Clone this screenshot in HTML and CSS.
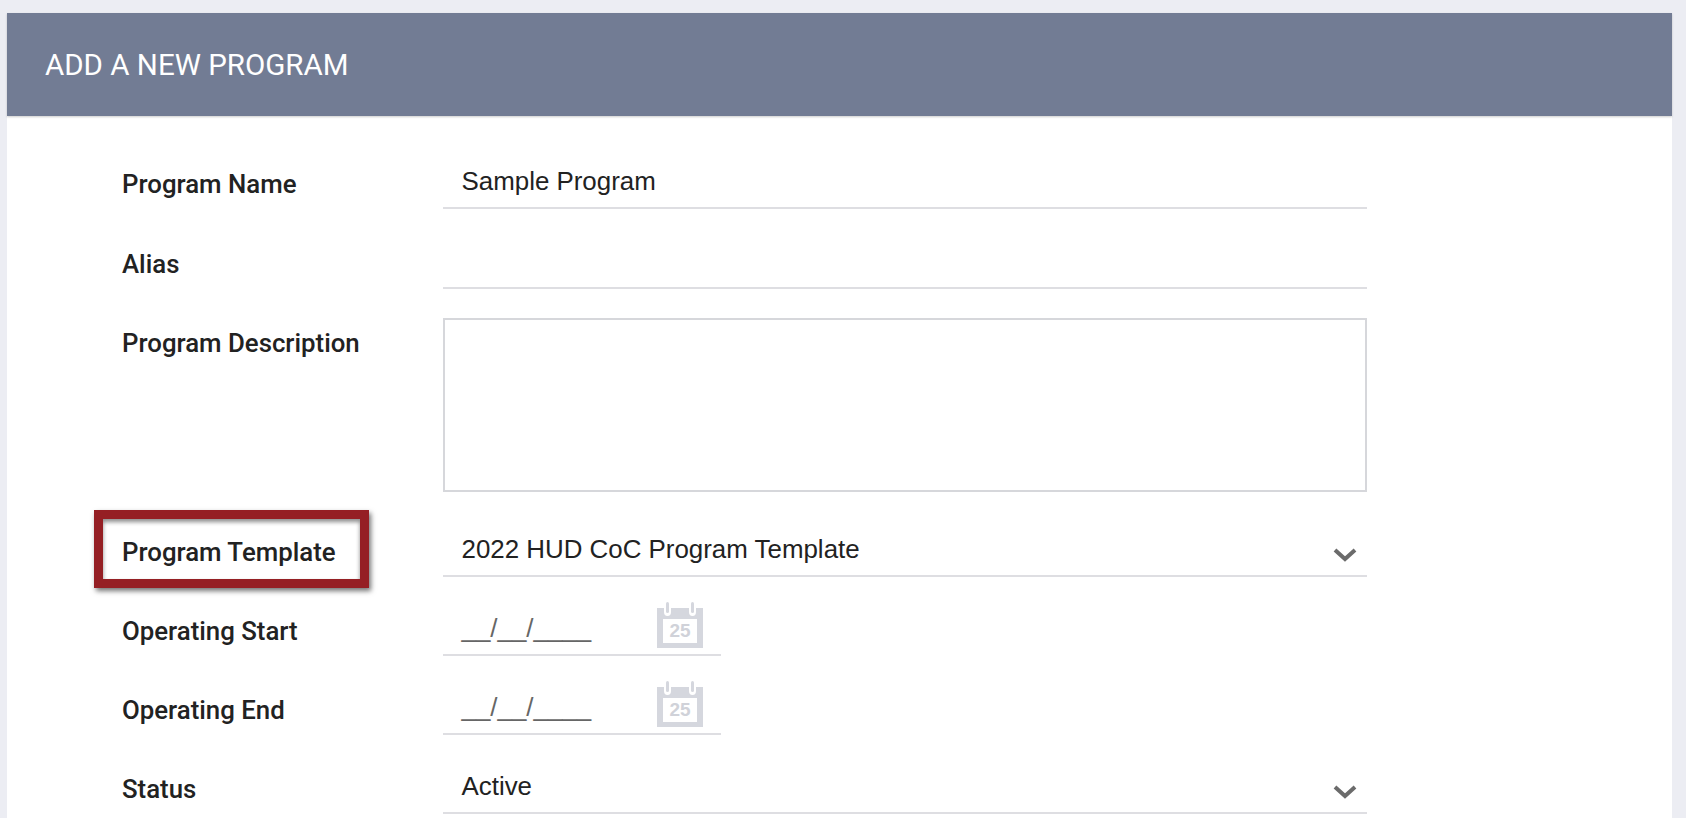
FILE: index.html
```html
<!DOCTYPE html>
<html lang="en">
<head>
  <meta charset="UTF-8">
  <title>Add a New Program</title>
  <link rel="stylesheet" href="styles.css">
</head>
<body>
  <div class="card">
    <div class="card-header">ADD A NEW PROGRAM</div>
    <div class="form">
      <div class="row">
        <div class="label">Program Name</div>
        <div class="field">Sample Program</div>
      </div>
      <div class="row">
        <div class="label">Alias</div>
        <div class="field"></div>
      </div>
      <div class="row row-tall">
        <div class="label">Program Description</div>
        <div class="textarea"></div>
      </div>
      <div class="row">
        <div class="label label-marked">Program Template<span class="marker"></span></div>
        <div class="field field-select">2022 HUD CoC Program Template
          <svg class="chevron" viewBox="0 0 24 14"><path d="M2 2 L12 11 L22 2" /></svg>
        </div>
      </div>
      <div class="row">
        <div class="label">Operating Start</div>
        <div class="date-wrap">
          <div class="field field-date">__/__/____</div>
          <svg class="cal" viewBox="0 0 46 46">
            <path class="cal-body" fill-rule="evenodd" d="M0 6 H7 V10 Q7 14 10.500 14 Q14 14 14 10 V6 H32 V10 Q32 14 35.500 14 Q39 14 39 10 V6 H46 V46 H0 Z M6 17 V41 H40 V17 Z" />
            <rect class="cal-body" x="9" y="0" width="3" height="11" rx="1.500" />
            <rect class="cal-body" x="34" y="0" width="3" height="11" rx="1.500" />
            <text class="cal-day" x="23" y="35">25</text>
          </svg>
        </div>
      </div>
      <div class="row">
        <div class="label">Operating End</div>
        <div class="date-wrap">
          <div class="field field-date">__/__/____</div>
          <svg class="cal" viewBox="0 0 46 46">
            <path class="cal-body" fill-rule="evenodd" d="M0 6 H7 V10 Q7 14 10.500 14 Q14 14 14 10 V6 H32 V10 Q32 14 35.500 14 Q39 14 39 10 V6 H46 V46 H0 Z M6 17 V41 H40 V17 Z" />
            <rect class="cal-body" x="9" y="0" width="3" height="11" rx="1.500" />
            <rect class="cal-body" x="34" y="0" width="3" height="11" rx="1.500" />
            <text class="cal-day" x="23" y="35">25</text>
          </svg>
        </div>
      </div>
      <div class="row">
        <div class="label">Status</div>
        <div class="field field-select">Active
          <svg class="chevron" viewBox="0 0 24 14"><path d="M2 2 L12 11 L22 2" /></svg>
        </div>
      </div>
    </div>
  </div>
</body>
</html>
```

FILE: styles.css
```css
* {
  box-sizing: border-box;
}

html, body {
  height: 100%;
}

body {
  margin: 0;
  padding: 13px 14px 0 7px;
  background-color: #ecedf3;
  font-family: Roboto, "Liberation Sans", sans-serif;
  color: #222;
  overflow: hidden;
}

.card {
  background-color: #fff;
  height: 805px;
}

.card-header {
  height: 103px;
  padding: 0 0 0 38px;
  display: flex;
  align-items: center;
  background-color: #727c94;
  box-shadow: 0 1px 2px rgba(0, 0, 0, 0.2);
  color: #fff;
  font-size: 29.500px;
}

.form {
  padding: 22px 0 0 115px;
}

.row {
  display: grid;
  grid-template-columns: 321px 924px;
  height: 79.500px;
}

.row-tall {
  height: 209px;
}

.row-tall ~ .row {
  height: 79px;
}

.label {
  position: relative;
  padding-top: 31px;
  font-size: 25.800px;
  font-weight: 500;
  line-height: 30px;
}

.field {
  position: relative;
  height: 71px;
  padding: 28px 0 0 18.500px;
  border-bottom: 2px solid #dedee2;
  font-family: "Liberation Sans", sans-serif;
  font-size: 25.900px;
  line-height: 30px;
}

.textarea {
  height: 174px;
  margin-top: 21px;
  border: 2px solid #d6d7db;
}

.date-wrap {
  position: relative;
  width: 278px;
}

.field-date {
  color: #666;
}

.chevron {
  position: absolute;
  right: 10px;
  top: 42px;
  width: 24px;
  height: 14px;
}

.chevron path {
  fill: none;
  stroke: #6b6b6b;
  stroke-width: 4;
}

.cal {
  position: absolute;
  left: 214px;
  top: 17px;
  width: 46px;
  height: 46px;
}

.cal-body {
  fill: #d5d7de;
}

.cal-day {
  fill: #d0d2d9;
  font-family: "Liberation Sans", sans-serif;
  font-size: 19px;
  font-weight: 700;
  text-anchor: middle;
}

/* annotation box over the label */
.marker {
  position: absolute;
  left: -28px;
  top: 4px;
  width: 275px;
  height: 78px;
  border: 9px solid #951f24;
  box-shadow: 2px 3px 5px rgba(0, 0, 0, 0.55), inset 0 3px 4px rgba(0, 0, 0, 0.45);
}
```
